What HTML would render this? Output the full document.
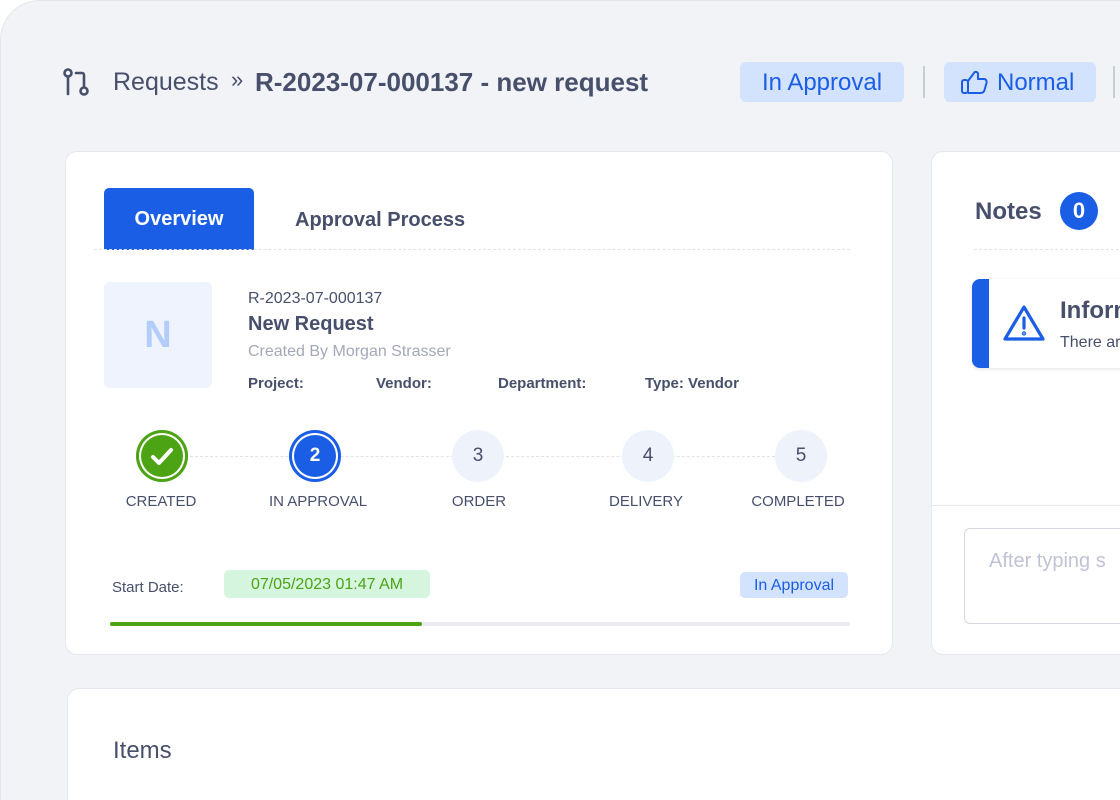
<!DOCTYPE html>
<html><head><style>
*{box-sizing:border-box;margin:0;padding:0}
html{width:1120px;height:800px;overflow:hidden}
body{width:1120px;height:800px;background:#fff;font-family:"Liberation Sans",sans-serif;color:#474f6b;overflow:hidden;position:relative}
.frame{position:absolute;left:0;top:0;width:1160px;height:840px;background:#f1f3f7;border:1px solid #e4e6ec;border-radius:40px}
.a{position:absolute;white-space:nowrap}
.card{position:absolute;background:#fff;border:1px solid #e6e8ee;border-radius:12px}
.step{position:absolute;width:52px;height:52px;border-radius:50%;background:#eef2fb;color:#474f6b;font-size:19px;text-align:center;line-height:52px}
.lbl{position:absolute;font-size:15px;color:#474f6b;text-align:center;width:140px}
</style></head><body>
<div class="frame"></div>
<svg class="a" style="left:61px;top:67px" width="30" height="30" viewBox="0 0 30 30" fill="none" stroke="#474f6b" stroke-width="2.6" stroke-linecap="round"><circle cx="7" cy="6" r="3.5"/><line x1="7" y1="10" x2="7" y2="27"/><circle cx="23" cy="24" r="3.5"/><path d="M15 6h6a2 2 0 0 1 2 2v12"/></svg>
<div class="a" style="left:113px;top:68px;font-size:25px;color:#474f6b">Requests</div>
<div class="a" style="left:231px;top:67px;font-size:22px;color:#474f6b">»</div>
<div class="a" style="left:255px;top:67px;font-size:26px;color:#474f6b;font-weight:bold;letter-spacing:0px">R-2023-07-000137 - new request</div>
<div class="a" style="left:740px;top:62px;width:164px;height:40px;background:#d4e3fd;border-radius:6px;color:#1a5ee6;font-size:24px;text-align:center;line-height:41px">In Approval</div>
<div class="a" style="left:923px;top:66px;width:2px;height:32px;background:#c8ccd6"></div>
<div class="a" style="left:944px;top:62px;width:152px;height:40px;background:#d4e3fd;border-radius:6px;color:#1a5ee6;font-size:24px;line-height:41px;padding-left:53px">Normal</div>
<svg class="a" style="left:960px;top:69px" width="28" height="26" viewBox="0 0 28 26" fill="none" stroke="#1a5ee6" stroke-width="2" stroke-linejoin="round"><rect x="2" y="11" width="6" height="13" rx="2"/><path d="M8 12l6-8c1-2 4-1 4 1v5h6c2 0 3 2 2.5 4l-2 7c-.5 2-2 3-4 3H8"/></svg>
<div class="a" style="left:1113px;top:66px;width:2px;height:32px;background:#c8ccd6"></div>

<div class="card" style="left:65px;top:151px;width:828px;height:504px"></div>
<div class="a" style="left:104px;top:188px;width:150px;height:62px;background:#1a5ee6;border-radius:5px 5px 0 0;color:#fff;font-size:20px;font-weight:bold;text-align:center;line-height:62px">Overview</div>
<div class="a" style="left:295px;top:209px;font-size:20px;font-weight:bold;color:#474f6b">Approval Process</div>
<div class="a" style="left:94px;top:249px;width:756px;border-top:1px dashed #dfe2e8"></div>
<div class="a" style="left:104px;top:282px;width:108px;height:106px;background:#eef3fe;border-radius:6px;color:#b3cdfb;font-size:38px;font-weight:bold;text-align:center;line-height:106px">N</div>
<div class="a" style="left:248px;top:290px;font-size:16px;color:#474f6b">R-2023-07-000137</div>
<div class="a" style="left:248px;top:313px;font-size:20px;font-weight:bold;color:#474f6b">New Request</div>
<div class="a" style="left:248px;top:343px;font-size:16px;color:#a3a8b8">Created By Morgan Strasser</div>
<div class="a" style="left:248px;top:375px;font-size:15px;font-weight:bold;color:#474f6b">Project:</div>
<div class="a" style="left:376px;top:375px;font-size:15px;font-weight:bold;color:#474f6b">Vendor:</div>
<div class="a" style="left:498px;top:375px;font-size:15px;font-weight:bold;color:#474f6b">Department:</div>
<div class="a" style="left:645px;top:375px;font-size:15px;font-weight:bold;color:#474f6b">Type: Vendor</div>
<div class="a" style="left:170px;top:456px;width:630px;border-top:1px dashed #dfe2e8"></div>
<div class="step" style="left:136px;top:430px;background:#4ca314;box-shadow:inset 0 0 0 3px #4ca314,inset 0 0 0 5px #fff"><svg width="52" height="52" viewBox="0 0 52 52" style="position:absolute;left:0;top:0"><path d="M17 27l6 6 12-13" fill="none" stroke="#fff" stroke-width="4" stroke-linecap="round" stroke-linejoin="round"/></svg></div>
<div class="step" style="left:289px;top:430px;background:#1a5ee6;color:#fff;font-weight:bold;box-shadow:inset 0 0 0 3px #1a5ee6,inset 0 0 0 5px #fff">2</div>
<div class="step" style="left:452px;top:430px">3</div>
<div class="step" style="left:622px;top:430px">4</div>
<div class="step" style="left:775px;top:430px">5</div>
<div class="lbl" style="left:91px;top:493px">CREATED</div>
<div class="lbl" style="left:248px;top:493px">IN APPROVAL</div>
<div class="lbl" style="left:409px;top:493px">ORDER</div>
<div class="lbl" style="left:576px;top:493px">DELIVERY</div>
<div class="lbl" style="left:728px;top:493px">COMPLETED</div>
<div class="a" style="left:112px;top:579px;font-size:15px;color:#474f6b">Start Date:</div>
<div class="a" style="left:224px;top:570px;width:206px;height:28px;background:#d6f5de;border-radius:5px;color:#4ca314;font-size:16px;text-align:center;line-height:29px">07/05/2023 01:47 AM</div>
<div class="a" style="left:740px;top:572px;width:108px;height:26px;background:#d4e3fd;border-radius:5px;color:#1a5ee6;font-size:16px;text-align:center;line-height:27px">In Approval</div>
<div class="a" style="left:110px;top:622px;width:740px;height:4px;background:#ebecef;border-radius:2px"></div>
<div class="a" style="left:110px;top:622px;width:312px;height:4px;background:#4ca314;border-radius:2px"></div>

<div class="card" style="left:931px;top:151px;width:220px;height:504px"></div>
<div class="a" style="left:975px;top:198px;font-size:24px;font-weight:bold;color:#474f6b">Notes</div>
<div class="a" style="left:1060px;top:192px;width:38px;height:38px;border-radius:50%;background:#1a5ee6;color:#fff;font-size:22px;font-weight:bold;text-align:center;line-height:38px">0</div>
<div class="a" style="left:974px;top:249px;width:150px;border-top:1px dashed #dfe2e8"></div>
<div class="a" style="left:972px;top:279px;width:160px;height:89px;background:#fff;border-radius:8px;border-left:17px solid #1a5ee6;box-shadow:0 1px 4px rgba(0,0,0,.12)"></div>
<svg class="a" style="left:1002px;top:304px" width="44" height="38" viewBox="0 0 44 38" fill="none" stroke="#1a5ee6" stroke-width="3.2" stroke-linejoin="round" stroke-linecap="round"><path d="M22 3L3 35h38z"/><line x1="22" y1="14" x2="22" y2="24"/><circle cx="22" cy="29.5" r="0.6" fill="#1a5ee6"/></svg>
<div class="a" style="left:1060px;top:297px;font-size:24px;font-weight:bold;color:#474f6b">Inform</div>
<div class="a" style="left:1060px;top:334px;font-size:16px;color:#474f6b">There are</div>
<div class="a" style="left:932px;top:505px;width:200px;border-top:1px solid #e6e8ee"></div>
<div class="a" style="left:964px;top:528px;width:180px;height:96px;border:1.5px solid #d6d8e0;border-radius:6px;padding:21px 0 0 24px;font-size:20px;color:#c0c3d4">After typing s</div>

<div class="card" style="left:67px;top:688px;width:1100px;height:140px"></div>
<div class="a" style="left:113px;top:737px;font-size:24px;color:#474f6b">Items</div>
</body></html>
